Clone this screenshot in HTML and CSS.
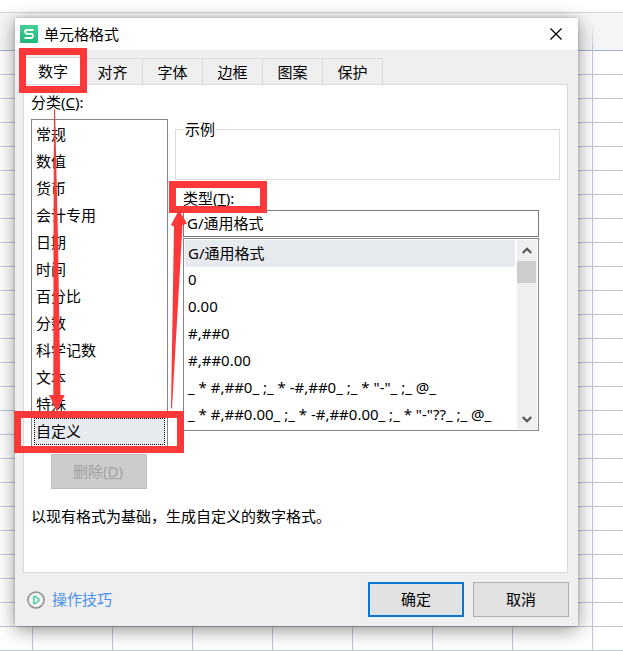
FILE: index.html
```html
<!DOCTYPE html>
<html lang="zh-CN">
<head>
<meta charset="utf-8">
<title>单元格格式</title>
<link rel="stylesheet" href="styles.css">
</head>
<body>
<main class="dialog" role="dialog" aria-labelledby="dialog-title">
  <header class="titlebar">
    <svg class="logo" viewBox="0 0 18 18" aria-hidden="true">
      <defs><linearGradient id="green" x2="0" y2="1"><stop stop-color="#42cf95"/><stop offset="1" stop-color="#20b77b"/></linearGradient></defs>
      <rect width="18" height="18" rx="1" fill="url(#green)"/>
      <path d="M13.500 5H6.500Q5 5 5 6.500T6.500 8.800H11.500Q13 8.800 13 10.600T11.500 13H4.500" fill="none" stroke="#fff" stroke-width="1.800"/>
    </svg>
    <h1 id="dialog-title">单元格格式</h1>
    <button class="close" type="button" aria-label="关闭">
      <svg viewBox="0 0 12 12"><path d="M.5 .5L11.500 11.500M11.500 .5L.5 11.500" stroke="#000" stroke-width="1.300" fill="none"/></svg>
    </button>
  </header>
  <nav class="tabs" role="tablist">
    <button type="button" class="tab active" role="tab" aria-selected="true">数字</button>
    <button type="button" class="tab" role="tab">对齐</button>
    <button type="button" class="tab" role="tab">字体</button>
    <button type="button" class="tab" role="tab">边框</button>
    <button type="button" class="tab" role="tab">图案</button>
    <button type="button" class="tab" role="tab">保护</button>
  </nav>
  <section class="panel">
    <label class="caption" for="category">分类(<u>C</u>):</label>
    <div class="columns">
      <div class="left">
        <select id="category" class="category" size="12">
          <option>常规</option><option>数值</option><option>货币</option><option>会计专用</option>
          <option>日期</option><option>时间</option><option>百分比</option><option>分数</option>
          <option>科学记数</option><option>文本</option><option>特殊</option><option selected>自定义</option>
        </select>
        <button type="button" class="delete" disabled>删除(<u>D</u>)</button>
      </div>
      <div class="right">
        <fieldset class="sample"><legend>示例</legend></fieldset>
        <div class="types">
          <label class="caption" for="type">类型(<u>T</u>):</label>
          <input id="type" type="text" value="G/通用格式">
          <div class="listbox">
            <select class="formats" size="7" aria-label="类型">
              <option selected>G/通用格式</option>
              <option>0</option>
              <option>0.00</option>
              <option>#,##0</option>
              <option>#,##0.00</option>
              <option>_ * #,##0_ ;_ * -#,##0_ ;_ * "-"_ ;_ @_ </option>
              <option>_ * #,##0.00_ ;_ * -#,##0.00_ ;_ * "-"??_ ;_ @_ </option>
            </select>
            <div class="scrollbar">
              <button type="button" aria-label="向上"><svg viewBox="0 0 10 8"><path d="M.7 6L5 1.700L9.300 6" fill="none" stroke="#555" stroke-width="2.200"/></svg></button>
              <div class="thumb"></div>
              <button type="button" class="down" aria-label="向下"><svg viewBox="0 0 10 8"><path d="M.7 2L5 6.300L9.300 2" fill="none" stroke="#555" stroke-width="2.200"/></svg></button>
            </div>
          </div>
        </div>
      </div>
    </div>
    <p class="note">以现有格式为基础，生成自定义的数字格式。</p>
  </section>
  <footer class="footer">
    <a class="tips" href="#">
      <svg viewBox="0 0 18 18" aria-hidden="true"><circle cx="9" cy="9" r="8" fill="#f5f5f5" stroke="#919191" stroke-width="1.600"/><path d="M6.800 5.400V12.600L8.300 12.500L12 9.700V8.400L8.500 5.500Z" fill="none" stroke="#48cda0" stroke-width="1.500" stroke-linejoin="round"/></svg>
      <span>操作技巧</span>
    </a>
    <button type="button" class="action primary">确定</button>
    <button type="button" class="action">取消</button>
  </footer>
</main>
<svg class="marks" width="300" height="460" viewBox="0 0 300 460" aria-hidden="true">
  <g fill="none" stroke="#fd3838" stroke-width="7">
    <rect x="22.500" y="51.500" width="61" height="38"/>
    <rect x="172.500" y="184.500" width="91" height="25"/>
    <rect x="17.500" y="414.500" width="163" height="35"/>
  </g>
  <g fill="#fd3838">
    <path d="M54 109H55L58 240L60.500 395H64.800L57 411L49 395H53.300L53.500 240Z"/>
    <path d="M171 408.500L174 226.500L171 225L179 210L187 223.500L182.500 225L172 408.500Z"/>
  </g>
</svg>
</body>
</html>
```
FILE: styles.css
```css
* { box-sizing: border-box; }

body {
  margin: 0;
  min-height: 100vh;
  padding: 18px 45px 25px 15px;
  overflow: hidden;
  font: 15px/20px "Noto Sans", "Noto Sans CJK SC", sans-serif;
  color: #000;
  background:
    linear-gradient(90deg, #bfc6da 1px, transparent 1px) 32px 50px / 80px 100% repeat-x,
    linear-gradient(transparent, #bfc6da) 592px 24px / 1px 26px no-repeat,
    linear-gradient(#fff 12px, #d2d5da 12px, #d2d5da 13px, #f4f6f8 13px, #f4f6f8 50px, #a5b1ca 50px) 0 0 / 100% 51px no-repeat,
    linear-gradient(#c0c8dc 1px, transparent 1px) 0 50px / 100% 24px,
    #fff;
}

button, input, select { font: inherit; color: inherit; }

.dialog {
  min-width: 540px;
  background: #efefef;
  box-shadow: 0 4px 18px rgba(0, 0, 0, .42), 0 0 3px rgba(0, 0, 0, .22);
}

.titlebar {
  display: flex;
  align-items: center;
  height: 32px;
  padding: 0 16px 0 5px;
  background: #fff;
}
.titlebar h1 {
  flex: 1;
  margin: 0 0 0 6px;
  font-size: 15px;
  font-weight: 400;
}
.logo { width: 18px; height: 18px; }
.close {
  display: flex;
  padding: 0;
  border: 0;
  background: none;
}
.close svg { width: 12px; height: 12px; }

.tabs {
  display: flex;
  align-items: flex-end;
  height: 34px;
  padding: 0 8px;
}
.tab {
  width: 60px;
  height: 26px;
  padding: 0;
  border: solid #d9d9d9;
  border-width: 1px 1px 0 0;
  background: #efefef;
}
.tab.active {
  height: 27px;
  border-left-width: 1px;
  background: #fff;
}

.panel {
  margin: 0 10px 0 8px;
  padding: 7px 7px 46px;
  border: 1px solid #d9d9d9;
  background: #fff;
}
.caption { display: block; }
.columns {
  display: grid;
  grid-template-columns: 137px 1fr;
  gap: 7px;
  margin-top: 7px;
}

select {
  appearance: none;
  display: block;
  width: 100%;
  margin: 0;
  padding: 0;
  border: 0;
  border-radius: 0;
  outline: 0;
  background: #fff;
  scrollbar-width: none;
}
option {
  height: 27px;
  padding: 2px 3px 5px;
  line-height: 20px;
  color: #000;
}
option:checked { background: linear-gradient(#e7eaef, #e7eaef); color: #000; }

.category {
  height: 328px;
  padding: 1px 2px;
  border: 1px solid #828790;
}
.category option { padding-left: 2px; }
.category option:checked { outline: 1px dotted #000; outline-offset: -1px; }

.delete {
  display: block;
  width: 96px;
  height: 35px;
  margin: 7px 0 0 20px;
  padding: 0 2px 2px 0;
  border: 1px solid #bfbfbf;
  background: #ccc;
  color: #a0a0a0;
}

.sample {
  height: 61px;
  margin: 0;
  padding: 0 8px;
  border: 1px solid #dcdcdc;
}
.sample legend { padding: 0 1px; }

.types { margin: 8px 21px 0 8px; }
.types input {
  display: block;
  width: 100%;
  height: 27px;
  margin: 2px 0 1px;
  padding: 0 3px 2px;
  border: 1px solid #7a7a7a;
  outline: 0;
}
.listbox {
  display: flex;
  gap: 2px;
  padding: 1px;
  border: 1px solid #828790;
}
.formats { flex: 1; min-width: 0; height: 189px; }

.scrollbar {
  display: flex;
  flex-direction: column;
  width: 20px;
  padding-right: 1px;
  background: #efefef;
}
.scrollbar button {
  display: flex;
  align-items: center;
  justify-content: center;
  height: 21px;
  padding: 0;
  border: 0;
  background: none;
}
.scrollbar svg { width: 10px; height: 8px; }
.scrollbar .down { margin-top: auto; }
.thumb { height: 22px; background: #cdcdcd; }

.note { margin: 17px 0 0; }

.footer {
  display: flex;
  align-items: center;
  gap: 9px;
  padding: 9px 9px 9px 12px;
}
.tips {
  display: flex;
  align-items: center;
  gap: 7px;
  margin-right: auto;
  color: #4a90ee;
  text-decoration: none;
}
.tips svg { width: 18px; height: 18px; }
.tips span { padding-bottom: 2px; }
.action {
  width: 96px;
  height: 35px;
  padding: 0 0 2px;
  border: 1px solid #adadad;
  background: #e1e1e1;
}
.action.primary { border: 2px solid #0078d7; }

.marks {
  position: absolute;
  top: 0;
  left: 0;
  pointer-events: none;
}
```
